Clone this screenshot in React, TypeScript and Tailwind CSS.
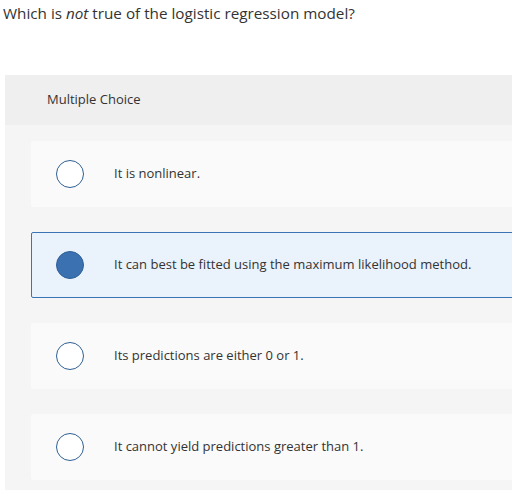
import React from "react";

const options = [
  "It is nonlinear.",
  "It can best be fitted using the maximum likelihood method.",
  "Its predictions are either 0 or 1.",
  "It cannot yield predictions greater than 1.",
];

export default function App() {
  const selected = 1;
  return (
    <div
      className="w-[512px] h-[490px] overflow-hidden bg-white"
      style={{ fontFamily: "'Open Sans', Lato, sans-serif" }}
    >
      <div className="pl-[3px] pt-[3px] h-[75px] text-[15.25px] leading-[20px] text-[#333]">
        Which is <em>not</em> true of the logistic regression model?
      </div>
      <div className="ml-[5px] w-[620px] bg-[#f5f5f5]">
        <div className="h-[50px] bg-[#efefef] flex items-center pl-[42px] text-[13px] text-[#333]">
          Multiple Choice
        </div>
        <div className="pl-[26px] pt-[16px] pb-[10px] flex flex-col gap-[25px]">
          {options.map((o, i) => {
            const sel = i === selected;
            return (
              <div
                key={i}
                className={
                  sel
                    ? "h-[66px] flex items-center rounded-[2px] border border-[#3b74b6] bg-[#eaf2fc]"
                    : "h-[66px] flex items-center rounded-[2px] border border-transparent bg-[#fafafa]"
                }
              >
                <div className="ml-[24px] w-[28px] h-[28px] shrink-0">
                  {sel ? (
                    <div className="w-[28px] h-[28px] rounded-full bg-[#3b70b1] border border-[#2f609a]" />
                  ) : (
                    <div className="w-[28px] h-[28px] rounded-full bg-white border-[1.5px] border-[#2f5f93]" />
                  )}
                </div>
                <div className="ml-[30px] text-[13px] text-[#333]">{o}</div>
              </div>
            );
          })}
        </div>
      </div>
    </div>
  );
}
